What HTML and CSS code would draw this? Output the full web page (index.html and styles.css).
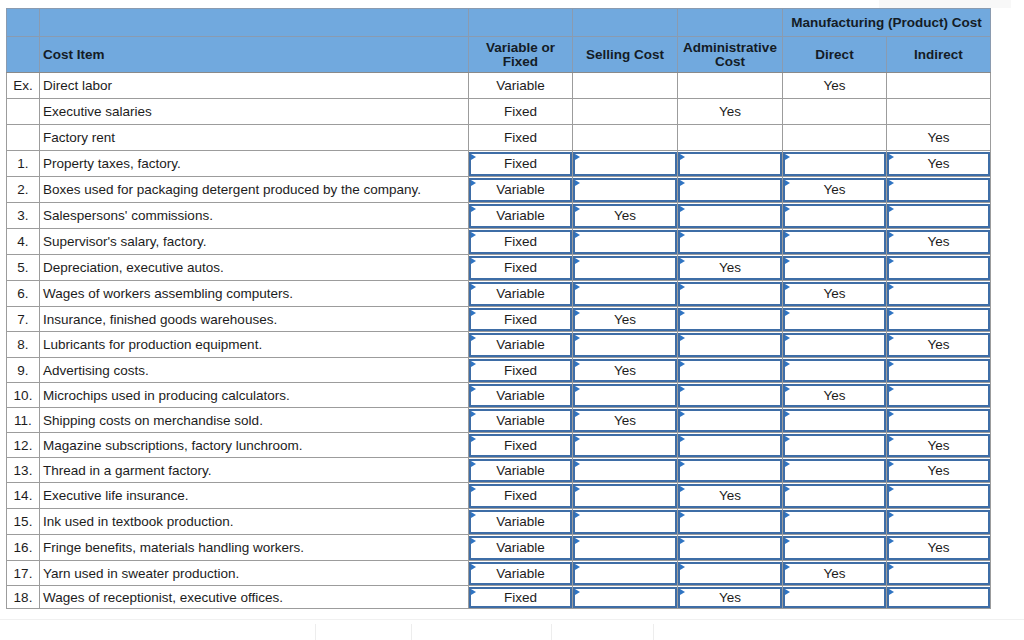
FILE: index.html
```html
<!DOCTYPE html>
<html lang="en">
<head>
<meta charset="utf-8">
<title>Cost classification</title>
<link rel="stylesheet" href="styles.css">
</head>
<body>
<div class="topbar"><div class="topbox"></div></div>
<table class="grid">
  <colgroup>
    <col class="c-num"><col class="c-item"><col class="c-var"><col class="c-sell"><col class="c-adm"><col class="c-dir"><col class="c-ind">
  </colgroup>
  <thead>
    <tr class="h1">
      <th></th><th></th><th></th><th></th><th></th>
      <th colspan="2">Manufacturing (Product) Cost</th>
    </tr>
    <tr class="h2">
      <th></th>
      <th class="left">Cost Item</th>
      <th>Variable or<br>Fixed</th>
      <th>Selling Cost</th>
      <th>Administrative<br>Cost</th>
      <th>Direct</th>
      <th>Indirect</th>
    </tr>
  </thead>
  <tbody>
    <tr class="r26"><td class="num">Ex.</td><td class="item">Direct labor</td><td>Variable</td><td></td><td></td><td>Yes</td><td></td></tr>
    <tr class="r26"><td class="num"></td><td class="item">Executive salaries</td><td>Fixed</td><td></td><td>Yes</td><td></td><td></td></tr>
    <tr class="r26"><td class="num"></td><td class="item">Factory rent</td><td>Fixed</td><td></td><td></td><td></td><td>Yes</td></tr>

    <tr class="r26 q"><td class="num">1.</td><td class="item">Property taxes, factory.</td><td><div class="box">Fixed</div></td><td><div class="box"></div></td><td><div class="box"></div></td><td><div class="box"></div></td><td><div class="box">Yes</div></td></tr>
    <tr class="r26 q"><td class="num">2.</td><td class="item">Boxes used for packaging detergent produced by the company.</td><td><div class="box">Variable</div></td><td><div class="box"></div></td><td><div class="box"></div></td><td><div class="box">Yes</div></td><td><div class="box"></div></td></tr>
    <tr class="r26 q"><td class="num">3.</td><td class="item">Salespersons' commissions.</td><td><div class="box">Variable</div></td><td><div class="box">Yes</div></td><td><div class="box"></div></td><td><div class="box"></div></td><td><div class="box"></div></td></tr>
    <tr class="r26 q"><td class="num">4.</td><td class="item">Supervisor's salary, factory.</td><td><div class="box">Fixed</div></td><td><div class="box"></div></td><td><div class="box"></div></td><td><div class="box"></div></td><td><div class="box">Yes</div></td></tr>
    <tr class="r26 q"><td class="num">5.</td><td class="item">Depreciation, executive autos.</td><td><div class="box">Fixed</div></td><td><div class="box"></div></td><td><div class="box">Yes</div></td><td><div class="box"></div></td><td><div class="box"></div></td></tr>
    <tr class="r26 q"><td class="num">6.</td><td class="item">Wages of workers assembling computers.</td><td><div class="box">Variable</div></td><td><div class="box"></div></td><td><div class="box"></div></td><td><div class="box">Yes</div></td><td><div class="box"></div></td></tr>
    <tr class="r25 q"><td class="num">7.</td><td class="item">Insurance, finished goods warehouses.</td><td><div class="box">Fixed</div></td><td><div class="box">Yes</div></td><td><div class="box"></div></td><td><div class="box"></div></td><td><div class="box"></div></td></tr>
    <tr class="r26 q"><td class="num">8.</td><td class="item">Lubricants for production equipment.</td><td><div class="box">Variable</div></td><td><div class="box"></div></td><td><div class="box"></div></td><td><div class="box"></div></td><td><div class="box">Yes</div></td></tr>
    <tr class="r25 q"><td class="num">9.</td><td class="item">Advertising costs.</td><td><div class="box">Fixed</div></td><td><div class="box">Yes</div></td><td><div class="box"></div></td><td><div class="box"></div></td><td><div class="box"></div></td></tr>
    <tr class="r25 q"><td class="num">10.</td><td class="item">Microchips used in producing calculators.</td><td><div class="box">Variable</div></td><td><div class="box"></div></td><td><div class="box"></div></td><td><div class="box">Yes</div></td><td><div class="box"></div></td></tr>
    <tr class="r25 q"><td class="num">11.</td><td class="item">Shipping costs on merchandise sold.</td><td><div class="box">Variable</div></td><td><div class="box">Yes</div></td><td><div class="box"></div></td><td><div class="box"></div></td><td><div class="box"></div></td></tr>
    <tr class="r25 q"><td class="num">12.</td><td class="item">Magazine subscriptions, factory lunchroom.</td><td><div class="box">Fixed</div></td><td><div class="box"></div></td><td><div class="box"></div></td><td><div class="box"></div></td><td><div class="box">Yes</div></td></tr>
    <tr class="r25 q"><td class="num">13.</td><td class="item">Thread in a garment factory.</td><td><div class="box">Variable</div></td><td><div class="box"></div></td><td><div class="box"></div></td><td><div class="box"></div></td><td><div class="box">Yes</div></td></tr>
    <tr class="r26 q"><td class="num">14.</td><td class="item">Executive life insurance.</td><td><div class="box">Fixed</div></td><td><div class="box"></div></td><td><div class="box">Yes</div></td><td><div class="box"></div></td><td><div class="box"></div></td></tr>
    <tr class="r26 q"><td class="num">15.</td><td class="item">Ink used in textbook production.</td><td><div class="box">Variable</div></td><td><div class="box"></div></td><td><div class="box"></div></td><td><div class="box"></div></td><td><div class="box"></div></td></tr>
    <tr class="r26 q"><td class="num">16.</td><td class="item">Fringe benefits, materials handling workers.</td><td><div class="box">Variable</div></td><td><div class="box"></div></td><td><div class="box"></div></td><td><div class="box"></div></td><td><div class="box">Yes</div></td></tr>
    <tr class="r25 q"><td class="num">17.</td><td class="item">Yarn used in sweater production.</td><td><div class="box">Variable</div></td><td><div class="box"></div></td><td><div class="box"></div></td><td><div class="box">Yes</div></td><td><div class="box"></div></td></tr>
    <tr class="r23 q"><td class="num">18.</td><td class="item">Wages of receptionist, executive offices.</td><td><div class="box">Fixed</div></td><td><div class="box"></div></td><td><div class="box">Yes</div></td><td><div class="box"></div></td><td><div class="box"></div></td></tr>
  </tbody>
</table>
<div class="footer">
  <div class="fcell f1"></div>
  <div class="fcell f2"></div>
  <div class="fcell f3"></div>
  <div class="fcell f4"></div>
  <div class="fcell f5"></div>
</div>
</body>
</html>
```

FILE: styles.css
```css
html, body {
  margin: 0;
  padding: 0;
  background: #ffffff;
}
body {
  font-family: "Liberation Sans", Arial, sans-serif;
  font-size: 13.5px;
  color: #1c1c1c;
}
.topbar {
  height: 8px;
  display: flex;
  justify-content: flex-end;
  padding-right: 13px;
}
.topbox {
  width: 132px;
  height: 8px;
  background: #f8f8f8;
}
.grid {
  margin-left: 6px;
  border-collapse: collapse;
  table-layout: fixed;
  width: 985px;
  border: 1px solid #808080;
}
.c-num { width: 33px; }
.c-item { width: 429px; }
.c-var { width: 104px; }
.c-sell { width: 105px; }
.c-adm { width: 105px; }
.c-dir { width: 104px; }
.c-ind { width: 104px; }

th {
  background: #71a9de;
  border: 1px solid #8a9bb0;
  font-weight: bold;
  font-size: 13.5px;
  line-height: 14px;
  color: #141c26;
  text-align: center;
  padding: 0;
}
th.left {
  text-align: left;
  padding-left: 3px;
}
tr.h1 { height: 28px; }
tr.h2 { height: 36px; }
tr.h2 th { border-bottom: 1px solid #8a8a8a; }

td {
  border: 1px solid #9c9c9c;
  text-align: center;
  padding: 0;
  line-height: 15px;
  white-space: nowrap;
}
td.num { text-align: center; }
td.item {
  text-align: left;
  padding-left: 3px;
}
tr.r26 { height: 26px; }
tr.r25 { height: 25px; }
tr.r23 { height: 23px; }

.box {
  position: relative;
  box-sizing: border-box;
  border: 2px solid #3e6da6;
  height: 24px;
  display: flex;
  align-items: center;
  justify-content: center;
}
tr.r25 .box { height: 23px; }
tr.r23 .box { height: 21px; }
.box::before {
  content: "";
  position: absolute;
  left: 0;
  top: 0;
  width: 0;
  height: 0;
  border-left: 5px solid #2f74c2;
  border-top: 3px solid transparent;
  border-bottom: 3px solid transparent;
}

.footer {
  margin-top: 10px;
  border-top: 1px solid #f0f0f0;
  display: flex;
  height: 20px;
  padding-top: 4px;
}
.fcell { height: 100%; }
.f1 { width: 315px; }
.f2 { width: 95px; border-left: 1px solid #ededed; }
.f3 { width: 139px; border-left: 1px solid #ededed; }
.f4 { width: 101px; border-left: 1px solid #ededed; }
.f5 { flex: 1; border-left: 1px solid #ededed; }
```
